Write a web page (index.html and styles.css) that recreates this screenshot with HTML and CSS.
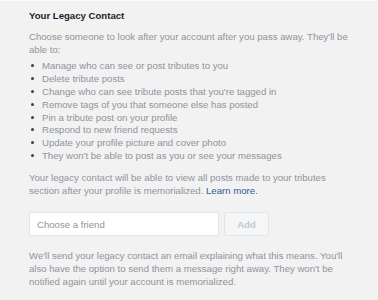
FILE: index.html
```html
<!DOCTYPE html>
<html>
<head>
<meta charset="utf-8">
<link rel="stylesheet" href="styles.css">
</head>
<body>
<div class="panel">
  <h3 class="title">Your Legacy Contact</h3>
  <p class="text intro">Choose someone to look after your account after you pass away. They'll be able to:</p>
  <ul class="list">
    <li>Manage who can see or post tributes to you</li>
    <li>Delete tribute posts</li>
    <li>Change who can see tribute posts that you're tagged in</li>
    <li>Remove tags of you that someone else has posted</li>
    <li>Pin a tribute post on your profile</li>
    <li>Respond to new friend requests</li>
    <li>Update your profile picture and cover photo</li>
    <li>They won't be able to post as you or see your messages</li>
  </ul>
  <p class="text view">Your legacy contact will be able to view all posts made to your tributes section after your profile is memorialized. <a class="link" href="#">Learn more.</a></p>
  <div class="chooser">
    <input class="friend" type="text" placeholder="Choose a friend">
    <button class="add" disabled>Add</button>
  </div>
  <p class="text note">We'll send your legacy contact an email explaining what this means. You'll also have the option to send them a message right away. They won't be notified again until your account is memorialized.</p>
</div>
</body>
</html>
```

FILE: styles.css
```css
html, body {
  margin: 0;
  padding: 0;
}
body {
  background: #f2f2f2;
  border-top: 1px solid #fafafa;
  font-family: "Liberation Sans", Arial, sans-serif;
  font-size: 9.6px;
  line-height: 12.8px;
  color: #90949c;
  height: 299px;
  overflow: hidden;
}
.panel {
  padding: 9px 20px 0 29px;
}
.title {
  margin: 0;
  font-size: 9.6px;
  font-weight: bold;
  color: #1d2129;
  line-height: 12.8px;
}
.text {
  margin: 0;
}
.intro {
  margin-top: 8px;
}
.list {
  list-style: none;
  margin: 4px 0 0 0;
  padding: 0;
}
.list li {
  display: flex;
  align-items: flex-start;
}
.list li::before {
  content: "";
  flex: none;
  width: 3px;
  height: 3px;
  border-radius: 50%;
  background: #3b3e44;
  margin: 4px 8px 0 2px;
}
.view {
  margin-top: 9px;
}
.link {
  color: #365899;
  text-decoration: none;
}
.chooser {
  display: flex;
  gap: 5px;
  margin-top: 15px;
}
.friend {
  box-sizing: border-box;
  width: 190px;
  height: 24px;
  margin: 0;
  padding: 0 7px;
  border: 1px solid #e3e4e6;
  background: #fff;
  font-family: "Liberation Sans", Arial, sans-serif;
  font-size: 9.6px;
  color: #1d2129;
  outline: none;
}
.friend::placeholder {
  color: #90949c;
}
.add {
  box-sizing: border-box;
  width: 45px;
  height: 24px;
  margin: 0;
  padding: 0;
  border: 1px solid #e4e5e8;
  border-radius: 2px;
  background: #f5f6f7;
  font-family: "Liberation Sans", Arial, sans-serif;
  font-size: 9.6px;
  font-weight: bold;
  color: #c4c7cc;
}
.note {
  margin-top: 14px;
}
```
